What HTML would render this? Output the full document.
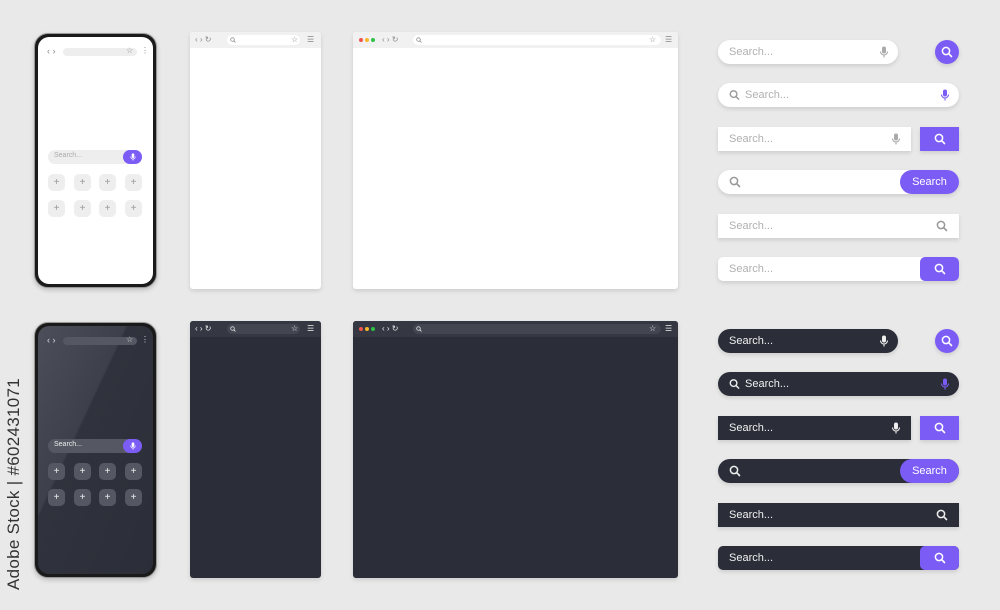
<!DOCTYPE html>
<html><head><meta charset="utf-8"><style>
*{box-sizing:border-box;margin:0;padding:0}
body{width:1000px;height:610px;background:#e9e9e9;position:relative;overflow:hidden;font-family:"Liberation Sans",sans-serif}
.a{position:absolute}
.sh{box-shadow:0 2px 4px rgba(0,0,0,.12)}
.t{font-size:11px;color:#b0b0b0;position:absolute;top:50%;transform:translateY(-50%)}
.dk .t{color:#f0f0f0}
.ic{position:absolute;top:50%;transform:translateY(-50%)}
.pu{background:#7b5cf5}
.ph{border-radius:14px;background:#111;border:1.5px solid #999;box-shadow:0 2px 5px rgba(0,0,0,.2)}
.gb{position:absolute;width:17px;height:17px;border-radius:5px;font-size:10px;text-align:center;line-height:17px}
</style></head><body>
<svg width="0" height="0" style="position:absolute">
<symbol id="s" viewBox="0 0 12 12"><circle cx="5" cy="5" r="3.6" fill="none" stroke="currentColor" stroke-width="1.5"/><path d="M7.6 7.6L10.5 10.5" stroke="currentColor" stroke-width="1.6" stroke-linecap="round"/></symbol>
<symbol id="m" viewBox="0 0 12 12"><rect x="4" y="0.5" width="4" height="7" rx="2" fill="currentColor"/><path d="M2.5 5.5a3.5 3.5 0 0 0 7 0M6 9v2.5" fill="none" stroke="currentColor" stroke-width="1.1"/></symbol>
</svg>

<div class="a" style="left:4px;top:590px;transform:rotate(-90deg);transform-origin:0 0;font-size:17px;color:#333;white-space:nowrap;letter-spacing:.3px">Adobe Stock | #602431071</div>

<!-- light phone -->
<div class="a ph" style="left:34px;top:33px;width:123px;height:255px;background:#1a1a1a"></div>
<div class="a" style="left:38px;top:37px;width:115px;height:247px;border-radius:11px;background:#fff">
 <div class="a" style="left:9px;top:9px;font-size:9px;color:#888">‹ ›</div>
 <div class="a" style="left:25px;top:11px;width:74px;height:8px;border-radius:4px;background:#eee"></div>
 <div class="a" style="left:88px;top:9px;font-size:8px;color:#888">☆</div>
 <div class="a" style="left:103px;top:9px;font-size:8px;color:#888">⋮</div>
 <div class="a" style="left:10px;top:113px;width:94px;height:14px;border-radius:7px;background:#eee"><span style="position:absolute;left:6px;top:2px;font-size:7px;color:#aaa">Search...</span></div>
 <div class="a pu" style="left:85px;top:113px;width:19px;height:14px;border-radius:7px;color:#fff"><svg style="position:absolute;left:6px;top:3px" width="8" height="8"><use href="#m"/></svg></div>
 <div class="gb" style="left:10px;top:137px;background:#eee;color:#999">+</div><div class="gb" style="left:36px;top:137px;background:#eee;color:#999">+</div><div class="gb" style="left:61px;top:137px;background:#eee;color:#999">+</div><div class="gb" style="left:87px;top:137px;background:#eee;color:#999">+</div>
 <div class="gb" style="left:10px;top:163px;background:#eee;color:#999">+</div><div class="gb" style="left:36px;top:163px;background:#eee;color:#999">+</div><div class="gb" style="left:61px;top:163px;background:#eee;color:#999">+</div><div class="gb" style="left:87px;top:163px;background:#eee;color:#999">+</div>
</div>

<!-- dark phone -->
<div class="a ph" style="left:34px;top:322px;width:123px;height:256px;background:#1a1a1a"></div>
<div class="a" style="left:38px;top:326px;width:115px;height:248px;border-radius:11px;background:linear-gradient(115deg,#4c4f59 0%,#3d404a 38%,#30333d 39%,#2b2e38 100%)">
 <div class="a" style="left:9px;top:9px;font-size:9px;color:#ddd">‹ ›</div>
 <div class="a" style="left:25px;top:11px;width:74px;height:8px;border-radius:4px;background:#555862"></div>
 <div class="a" style="left:88px;top:9px;font-size:8px;color:#ddd">☆</div>
 <div class="a" style="left:103px;top:9px;font-size:8px;color:#ddd">⋮</div>
 <div class="a" style="left:10px;top:113px;width:94px;height:14px;border-radius:7px;background:#555862"><span style="position:absolute;left:6px;top:2px;font-size:7px;color:#eee">Search...</span></div>
 <div class="a pu" style="left:85px;top:113px;width:19px;height:14px;border-radius:7px;color:#fff"><svg style="position:absolute;left:6px;top:3px" width="8" height="8"><use href="#m"/></svg></div>
 <div class="gb" style="left:10px;top:137px;background:#555862;color:#eee">+</div><div class="gb" style="left:36px;top:137px;background:#555862;color:#eee">+</div><div class="gb" style="left:61px;top:137px;background:#555862;color:#eee">+</div><div class="gb" style="left:87px;top:137px;background:#555862;color:#eee">+</div>
 <div class="gb" style="left:10px;top:163px;background:#555862;color:#eee">+</div><div class="gb" style="left:36px;top:163px;background:#555862;color:#eee">+</div><div class="gb" style="left:61px;top:163px;background:#555862;color:#eee">+</div><div class="gb" style="left:87px;top:163px;background:#555862;color:#eee">+</div>
</div>

<div class="a sh" style="left:190px;top:32px;width:131px;height:257px;background:#fff;border-radius:3px;overflow:hidden">
 <div style="height:16px;background:#f1f1f1;position:relative;font-size:8px;color:#888">
  <span class="a" style="left:5px;top:3px">‹ › ↻</span>
  <div class="a" style="left:37px;top:3px;width:73px;height:10px;border-radius:5px;background:#fff"></div>
  <svg class="a" style="left:40px;top:5px;color:#888" width="6" height="6"><use href="#s"/></svg>
  <span class="a" style="left:101px;top:3px">☆</span><span class="a" style="left:117px;top:3px">☰</span>
 </div>
</div>
<div class="a sh" style="left:190px;top:321px;width:131px;height:257px;background:#2b2e38;border-radius:3px;overflow:hidden">
 <div style="height:16px;background:#353842;position:relative;font-size:8px;color:#eee">
  <span class="a" style="left:5px;top:3px">‹ › ↻</span>
  <div class="a" style="left:37px;top:3px;width:73px;height:10px;border-radius:5px;background:#434650"></div>
  <svg class="a" style="left:40px;top:5px;color:#eee" width="6" height="6"><use href="#s"/></svg>
  <span class="a" style="left:101px;top:3px">☆</span><span class="a" style="left:117px;top:3px">☰</span>
 </div>
</div>
<div class="a sh" style="left:353px;top:32px;width:325px;height:257px;background:#fff;border-radius:3px;overflow:hidden">
 <div style="height:16px;background:#f1f1f1;position:relative;font-size:8px;color:#888">
  <span class="a" style="left:6px;top:6px;width:4px;height:4px;border-radius:2px;background:#f0554e"></span>
  <span class="a" style="left:12px;top:6px;width:4px;height:4px;border-radius:2px;background:#f5b82e"></span>
  <span class="a" style="left:18px;top:6px;width:4px;height:4px;border-radius:2px;background:#2fc046"></span>
  <span class="a" style="left:29px;top:3px">‹ › ↻</span>
  <div class="a" style="left:60px;top:3px;width:248px;height:10px;border-radius:5px;background:#fff"></div>
  <svg class="a" style="left:63px;top:5px;color:#888" width="6" height="6"><use href="#s"/></svg>
  <span class="a" style="left:296px;top:3px">☆</span><span class="a" style="left:312px;top:3px">☰</span>
 </div>
</div>
<div class="a sh" style="left:353px;top:321px;width:325px;height:257px;background:#2b2e38;border-radius:3px;overflow:hidden">
 <div style="height:16px;background:#353842;position:relative;font-size:8px;color:#eee">
  <span class="a" style="left:6px;top:6px;width:4px;height:4px;border-radius:2px;background:#f0554e"></span>
  <span class="a" style="left:12px;top:6px;width:4px;height:4px;border-radius:2px;background:#f5b82e"></span>
  <span class="a" style="left:18px;top:6px;width:4px;height:4px;border-radius:2px;background:#2fc046"></span>
  <span class="a" style="left:29px;top:3px">‹ › ↻</span>
  <div class="a" style="left:60px;top:3px;width:248px;height:10px;border-radius:5px;background:#434650"></div>
  <svg class="a" style="left:63px;top:5px;color:#eee" width="6" height="6"><use href="#s"/></svg>
  <span class="a" style="left:296px;top:3px">☆</span><span class="a" style="left:312px;top:3px">☰</span>
 </div>
</div>

<div class="a sh" style="left:718px;top:40px;width:180px;height:24px;border-radius:12px;background:#fff"><span class="t" style="left:11px">Search...</span><svg class="ic" style="right:8px;color:#aaa" width="12" height="12"><use href="#m"/></svg></div>
<div class="a sh pu" style="left:935px;top:40px;width:24px;height:24px;border-radius:12px;color:#fff"><svg class="ic" style="left:6px" width="12" height="12"><use href="#s"/></svg></div>

<div class="a sh" style="left:718px;top:83px;width:241px;height:24px;border-radius:12px;background:#fff"><svg class="ic" style="left:11px;color:#999" width="11" height="11"><use href="#s"/></svg><span class="t" style="left:27px">Search...</span><svg class="ic" style="right:8px;color:#7b5cf5" width="12" height="12"><use href="#m"/></svg></div>

<div class="a sh" style="left:718px;top:127px;width:193px;height:24px;background:#fff"><span class="t" style="left:11px">Search...</span><svg class="ic" style="right:9px;color:#aaa" width="12" height="12"><use href="#m"/></svg></div>
<div class="a sh pu" style="left:920px;top:127px;width:39px;height:24px;color:#fff"><svg class="ic" style="left:14px" width="12" height="12"><use href="#s"/></svg></div>

<div class="a sh" style="left:718px;top:170px;width:241px;height:24px;border-radius:12px;background:#fff"><svg class="ic" style="left:11px;color:#999" width="12" height="12"><use href="#s"/></svg>
<div class="a pu" style="right:0;top:0;width:59px;height:24px;border-radius:12px;color:#fff;font-size:11px;text-align:center;line-height:24px">Search</div></div>

<div class="a sh" style="left:718px;top:214px;width:241px;height:24px;background:#fff"><span class="t" style="left:11px">Search...</span><svg class="ic" style="right:11px;color:#999" width="12" height="12"><use href="#s"/></svg></div>

<div class="a sh" style="left:718px;top:257px;width:241px;height:24px;border-radius:5px;background:#fff;overflow:hidden"><span class="t" style="left:11px">Search...</span><div class="a pu" style="right:0;top:0;width:39px;height:24px;border-radius:5px;color:#fff"><svg class="ic" style="left:14px" width="12" height="12"><use href="#s"/></svg></div></div>

<div class="dk">
<div class="a sh" style="left:718px;top:329px;width:180px;height:24px;border-radius:12px;background:#2b2e38"><span class="t" style="left:11px">Search...</span><svg class="ic" style="right:8px;color:#eee" width="12" height="12"><use href="#m"/></svg></div>
<div class="a sh pu" style="left:935px;top:329px;width:24px;height:24px;border-radius:12px;color:#fff"><svg class="ic" style="left:6px" width="12" height="12"><use href="#s"/></svg></div>

<div class="a sh" style="left:718px;top:372px;width:241px;height:24px;border-radius:12px;background:#2b2e38"><svg class="ic" style="left:11px;color:#eee" width="11" height="11"><use href="#s"/></svg><span class="t" style="left:27px">Search...</span><svg class="ic" style="right:8px;color:#7b5cf5" width="12" height="12"><use href="#m"/></svg></div>

<div class="a sh" style="left:718px;top:416px;width:193px;height:24px;background:#2b2e38"><span class="t" style="left:11px">Search...</span><svg class="ic" style="right:9px;color:#eee" width="12" height="12"><use href="#m"/></svg></div>
<div class="a sh pu" style="left:920px;top:416px;width:39px;height:24px;color:#fff"><svg class="ic" style="left:14px" width="12" height="12"><use href="#s"/></svg></div>

<div class="a sh" style="left:718px;top:459px;width:241px;height:24px;border-radius:12px;background:#2b2e38"><svg class="ic" style="left:11px;color:#eee" width="12" height="12"><use href="#s"/></svg>
<div class="a pu" style="right:0;top:0;width:59px;height:24px;border-radius:12px;color:#fff;font-size:11px;text-align:center;line-height:24px">Search</div></div>

<div class="a sh" style="left:718px;top:503px;width:241px;height:24px;background:#2b2e38"><span class="t" style="left:11px">Search...</span><svg class="ic" style="right:11px;color:#eee" width="12" height="12"><use href="#s"/></svg></div>

<div class="a sh" style="left:718px;top:546px;width:241px;height:24px;border-radius:5px;background:#2b2e38;overflow:hidden"><span class="t" style="left:11px">Search...</span><div class="a pu" style="right:0;top:0;width:39px;height:24px;border-radius:5px;color:#fff"><svg class="ic" style="left:14px" width="12" height="12"><use href="#s"/></svg></div></div>
</div>
</body></html>
